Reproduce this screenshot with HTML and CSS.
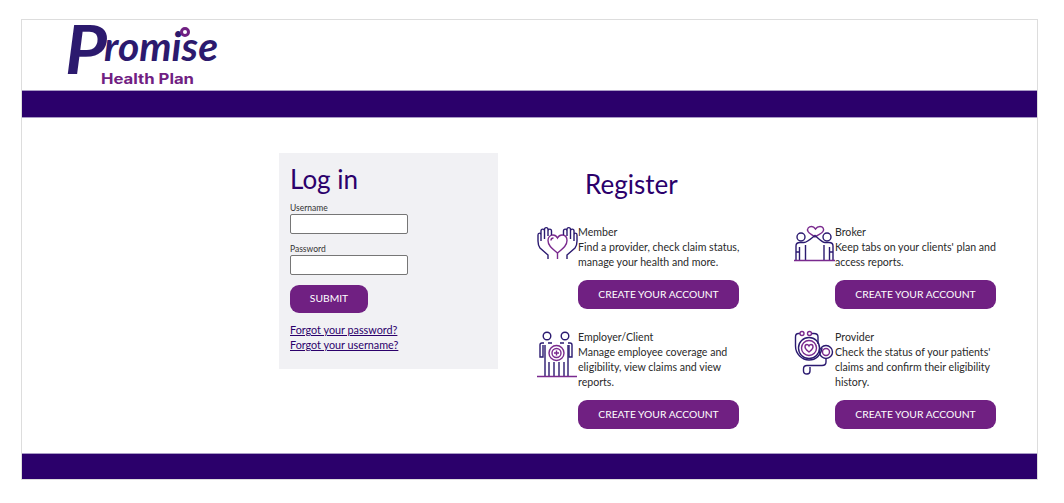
FILE: index.html
```html
<!DOCTYPE html>
<html lang="en">
<head>
    <meta charset="UTF-8">
    <title>Promise Health Plan</title>
    <link rel="stylesheet" href="styles.css">
</head>
<body>
    <div class="frame">
        <header class="logo-bar">
            <svg class="logo" width="180" height="70" viewBox="0 0 180 70">
                <text class="logo-p" x="7" y="54" textLength="42" lengthAdjust="spacingAndGlyphs">P</text>
                <text class="logo-word" x="46" y="41" textLength="114" lengthAdjust="spacingAndGlyphs">romise</text>
                <circle class="logo-dot" cx="127" cy="12" r="3.500"></circle>
                <text class="logo-sub" x="43" y="64" textLength="93" lengthAdjust="spacingAndGlyphs">Health Plan</text>
            </svg>
        </header>
        <div class="band"></div>

        <main class="content">
            <section class="login">
                <h1>Log in</h1>
                <label for="username">Username</label>
                <input id="username" type="text">
                <label for="password">Password</label>
                <input id="password" type="password">
                <button class="btn btn-submit" type="button">SUBMIT</button>
                <a href="#">Forgot your password?</a>
                <a href="#">Forgot your username?</a>
            </section>

            <section class="register">
                <h1>Register</h1>
                <div class="cards">
                    <div class="card">
                        <svg class="icon" width="41" height="40" viewBox="0 0 41 40">
                            <path class="pu" d="M20.5 29C14 24 11 21 11 16.500C11 13 13.500 11 16 11C18 11 19.500 12 20.500 14C21.500 12 23 11 25 11C28 11 30 13 30 16.500C30 21 27 24 20.500 29Z"/>
                            <path class="pu" d="M14 16.500C14 15 15 14 16.500 14M20.500 29V35"/>
                            <g class="nv">
                                <path d="M11 35V31L3 24C1.500 22 1 20 1 17V11C1 8.500 4 8.500 4 11V17M4 11V7C4 4.500 7.500 4.500 7.500 7V15M7.500 7V5.500C7.500 3 11 3 11 5.500V12M11 7C11 4.500 14.500 4.500 14.500 7V11"/>
                                <path d="M30 35V31L38 24C39.500 22 40 20 40 17V11C40 8.500 37 8.500 37 11V17M37 11V7C37 4.500 33.500 4.500 33.500 7V15M33.500 7V5.500C33.500 3 30 3 30 5.500V12M30 7C30 4.500 26.500 4.500 26.500 7V11"/>
                            </g>
                        </svg>
                        <div class="card-body">
                            <p>Member<br>Find a provider, check claim status,<br>manage your health and more.</p>
                            <a class="btn btn-create" href="#">CREATE YOUR ACCOUNT</a>
                        </div>
                    </div>

                    <div class="card">
                        <svg class="icon" width="41" height="40" viewBox="0 0 41 40">
                            <path class="pu" d="M21 13C18 10.500 15 9.500 14 7.500C12.500 4.500 15 2.500 17.500 2.500C19.500 2.500 20.500 3.500 21.500 5C22.500 3.500 24 2.500 26 2.500C29 2.500 30.500 5 29 7.500C28 9.500 24.500 10.500 21 13Z"/>
                            <g class="nv">
                                <circle cx="7" cy="13" r="4"/>
                                <circle cx="33" cy="13" r="4"/>
                                <path d="M2 36V22C2 19.500 3.500 18.500 6 18.500H10C13 18.500 18 14 21 11.500C24 14 28 18.500 31 18.500H35C37.500 18.500 39 19.500 39 22V36"/>
                                <path d="M2 28H5.500M35.500 28H39M5.500 23V36M11.500 21V36M30 21V36M35.500 23V36"/>
                            </g>
                            <path class="pu" d="M0 36.500H41"/>
                        </svg>
                        <div class="card-body">
                            <p>Broker<br>Keep tabs on your clients' plan and<br>access reports.</p>
                            <a class="btn btn-create" href="#">CREATE YOUR ACCOUNT</a>
                        </div>
                    </div>

                    <div class="card">
                        <svg class="icon" width="41" height="50" viewBox="0 0 41 50">
                            <g class="nv">
                                <circle cx="10" cy="7" r="3.800"/>
                                <circle cx="28" cy="7" r="3.800"/>
                                <path d="M7 14H5C3.500 14 3 15 3 16V28H6V16M31 14H33C34.500 14 35 15 35 16V28H32V16M11 14H15M23 14H27"/>
                                <path d="M8 16V47M12 33V47M17 33V47M22 33V47M27 33V47M31 16V47"/>
                            </g>
                            <g class="pu">
                                <circle cx="19.500" cy="24" r="7.500"/>
                                <circle cx="19.500" cy="24" r="4.500"/>
                                <path d="M19.500 21.500V26.500M17 24H22"/>
                                <path d="M0 47.500H40"/>
                            </g>
                        </svg>
                        <div class="card-body">
                            <p>Employer/Client<br>Manage employee coverage and<br>eligibility, view claims and view<br>reports.</p>
                            <a class="btn btn-create" href="#">CREATE YOUR ACCOUNT</a>
                        </div>
                    </div>

                    <div class="card">
                        <svg class="icon" width="41" height="50" viewBox="0 0 41 50">
                            <g class="nv">
                                <path d="M6 4.500H4.500C2.500 4.500 1.500 6 1.500 8V17C1.500 25 8 31 15 31C22 31 27 26 28 19M17 4.500H20C22 4.500 24 5.500 24 8V15"/>
                                <circle cx="15" cy="19" r="10.500"/>
                                <path d="M32 29V33C32 35.500 30.500 36.500 28 36.500H13C10.500 36.500 9.500 38 9.500 40V42C9.500 44.500 11 45 13 45C15 45 16 44 16 42V38"/>
                                <circle cx="32" cy="23" r="6.500"/>
                            </g>
                            <g class="pu">
                                <circle cx="8" cy="4.500" r="2"/>
                                <circle cx="15.500" cy="4.500" r="2"/>
                                <circle cx="15" cy="19" r="7.500"/>
                                <circle cx="32" cy="23" r="3.500"/>
                                <path d="M15 23C12.500 21 11 20 11 18C11 16.500 12 15.500 13 15.500C14 15.500 14.500 16 15 17C15.500 16 16 15.500 17 15.500C18 15.500 19 16.500 19 18C19 20 17.500 21 15 23Z"/>
                            </g>
                        </svg>
                        <div class="card-body">
                            <p>Provider<br>Check the status of your patients'<br>claims and confirm their eligibility<br>history.</p>
                            <a class="btn btn-create" href="#">CREATE YOUR ACCOUNT</a>
                        </div>
                    </div>
                </div>
            </section>
        </main>

        <div class="band band-foot"></div>
    </div>
</body>
</html>
```

FILE: styles.css
```css
body {
    margin: 0;
    font-family: Lato, "Open Sans", sans-serif;
    color: #2a2a2a;
    background: #fff;
}
.frame {
    box-sizing: border-box;
    width: 1017px;
    height: 461px;
    margin: 19px 0 0 21px;
    border: 1px solid #ddd;
    display: flex;
    flex-direction: column;
}
.logo-bar {
    height: 70px;
    padding-left: 36px;
}
.logo {
    display: block;
    overflow: visible;
}
.logo-p {
    font: italic 700 66px Lato, sans-serif;
    fill: #2c1a6e;
}
.logo-word {
    font: italic 700 40px Lato, sans-serif;
    fill: #2c1a6e;
}
.logo-dot {
    fill: #fff;
    stroke: #702082;
    stroke-width: 3;
}
.logo-sub {
    font: 700 14px Inter, sans-serif;
    fill: #702082;
}
.band {
    height: 26px;
    background: #2b006b;
    border-top: 1px solid #a99bc5;
    border-bottom: 1px solid #a99bc5;
    flex: none;
}
.band-foot {
    height: 25px;
    border-bottom: 0;
}
.content {
    flex: 1;
    display: flex;
    align-items: flex-start;
    padding: 35px 0 0 257px;
}
.login {
    box-sizing: border-box;
    width: 219px;
    height: 216px;
    padding: 10px 11px;
    background: #f1f1f4;
    display: flex;
    flex-direction: column;
    align-items: flex-start;
}
h1 {
    margin: 0;
    font-size: 26px;
    font-weight: 400;
    line-height: 32px;
    color: #2b006b;
}
.login label {
    font-size: 8.5px;
    line-height: 8px;
    margin: 9px 0 2px;
    color: #333;
}
.login input {
    box-sizing: border-box;
    width: 118px;
    height: 20px;
    margin: 0 0 11px;
    border: 1px solid #767676;
    border-radius: 2px;
    background: #fff;
}
.login input + label {
    margin-top: 0;
}
.login a {
    font-size: 10.8px;
    line-height: 15px;
    color: #2b006b;
}
.btn {
    box-sizing: border-box;
    display: flex;
    align-items: center;
    justify-content: center;
    border: 0;
    padding: 0 0 2px;
    font-family: inherit;
    font-size: 10.3px;
    color: #fff;
    background: #702082;
    text-decoration: none;
    border-radius: 9px;
}
.btn-submit {
    width: 78px;
    height: 28px;
    margin: -1px 0 9px;
}
.btn-create {
    width: 161px;
    height: 29px;
}
.register {
    margin-left: 39px;
    width: 500px;
}
.register h1 {
    margin: 15px 0 24px 48px;
}
.cards {
    display: grid;
    grid-template-columns: 257px 220px;
    row-gap: 20px;
}
.card {
    display: flex;
    align-items: flex-start;
}
.icon {
    flex: none;
}
.icon path,
.icon circle {
    fill: none;
    stroke-width: 1.4;
}
.nv {
    stroke: #2b1a70;
}
.pu,
.icon .pu {
    stroke: #7a2a8e;
}
.card-body p {
    margin: 0 0 10px;
    padding-top: 1px;
    font-size: 10.6px;
    line-height: 15px;
    white-space: nowrap;
}
```
